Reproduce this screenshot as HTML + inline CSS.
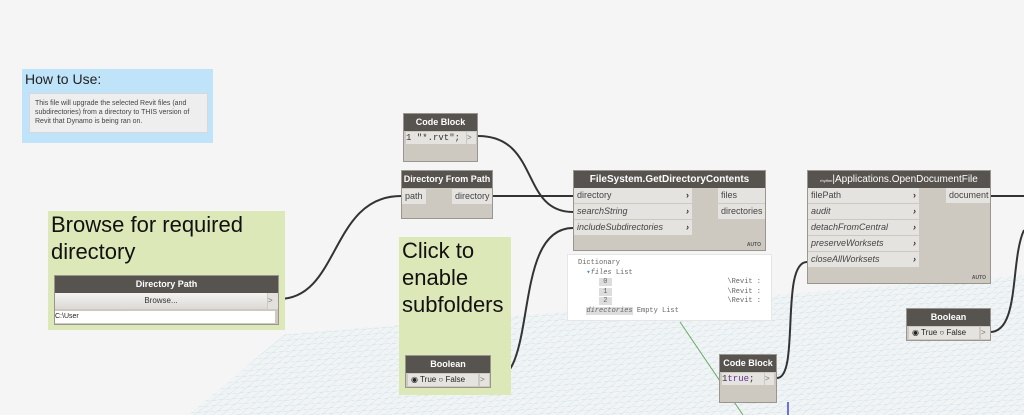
<!DOCTYPE html>
<html><head><meta charset="utf-8"><style>
*{box-sizing:border-box;margin:0;padding:0}
body{width:1024px;height:415px;overflow:hidden;background:#f5f5f5;font-family:"Liberation Sans",sans-serif;position:relative}
.a{position:absolute}
.node{position:absolute;background:#cdc9c1;border:1px solid #9a968f}
.hd{background:#57534f;color:#fff;font-weight:bold;font-size:9px;text-align:center;height:17px;line-height:17px}
.row{position:absolute;background:#e5e3df;font-size:9px;color:#444;height:15px;line-height:15px;padding-left:3px}
.it{font-style:italic}
.arr{position:absolute;right:3px;font-weight:bold;color:#333}
.note{position:absolute;background:#dde8b8;font-size:22px;color:#111;line-height:27px;padding-left:3px}
</style></head><body>
<svg class="a" style="left:0;top:0" width="1024" height="415">
<defs>
<pattern id="g" width="10" height="10" patternUnits="userSpaceOnUse" patternTransform="matrix(1.0,-0.075,-0.75,0.6,285,335)">
<rect width="10" height="10" fill="#f1f4f5"/>
<path d="M0 0H10M0 0V10" stroke="#c6dbe5" stroke-width="1.1" fill="none"/>
</pattern>
</defs>
<polygon points="285,334 1024,275 1024,415 188,415" fill="url(#g)"/>
<line x1="680" y1="322" x2="743" y2="415" stroke="#6a6" stroke-width="1"/>
<line x1="788" y1="402" x2="788" y2="415" stroke="#44d" stroke-width="1.5"/>
<g stroke="#333" stroke-width="2" fill="none">
<path d="M279 299 C340 299 330 196 401 196"/>
<path d="M478 136 C540 136 520 212 573 212"/>
<path d="M493 196 L573 196"/>
<path d="M491 381 C540 381 510 228 573 228"/>
<path d="M777 378 C800 378 780 262 807 262"/>
<path d="M990 196 L1024 196"/>
<path d="M990 332 C1020 332 1010 260 1024 230"/>
</g>
</svg>

<div class="a" style="left:22px;top:69px;width:191px;height:74px;background:#bfe3f9">
<div style="font-size:14px;color:#222;padding:2px 3px">How to Use:</div>
<div class="a" style="left:7px;top:24px;width:179px;height:40px;background:#eee;border:1px solid #d8d8d8;font-size:7px;color:#444;line-height:9px;padding:5px 5px">This file will upgrade the selected Revit files (and subdirectories) from a directory to THIS version of Revit that Dynamo is being ran on.</div>
</div>

<div class="note" style="left:48px;top:211px;width:237px;height:119px;padding-top:0">Browse for required<br>directory</div>
<div class="node" style="left:54px;top:275px;width:225px;height:50px">
<div class="hd">Directory Path</div>
<div class="a" style="left:0;top:17px;width:212px;height:16px;background:linear-gradient(#f4f3f1,#dcd9d4);font-size:8px;text-align:center;line-height:16px;color:#333">Browse...</div>
<div class="a" style="left:213px;top:17px;width:10px;height:16px;background:#e3e1dd;font-size:8px;line-height:16px;color:#777">&gt;</div>
<div class="a" style="left:0;top:35px;width:220px;height:12px;background:#fff;font-size:7px;line-height:12px;color:#222">C:\User</div>
</div>

<div class="note" style="left:399px;top:237px;width:112px;height:158px">Click to<br>enable<br>subfolders</div>
<div class="node" style="left:405px;top:355px;width:86px;height:33px">
<div class="hd">Boolean</div>
<div class="a" style="left:2px;top:18px;width:70px;height:12px;background:#e5e3df;font-size:8px;line-height:12px;color:#222;padding-left:3px">◉ True ○ False</div>
<div class="a" style="left:74px;top:18px;width:9px;height:12px;background:#e5e3df;font-size:8px;line-height:12px;color:#777">&gt;</div>
</div>

<div class="node" style="left:403px;top:113px;width:75px;height:49px">
<div class="hd">Code Block</div>
<div class="a" style="left:2px;top:18px;width:60px;height:12px;background:#e5e3df;font-family:'Liberation Mono',monospace;font-size:9px;line-height:12px;color:#333">1 "*.rvt";</div>
<div class="a" style="left:63px;top:18px;width:9px;height:12px;background:#e5e3df;font-size:8px;line-height:12px;color:#777">&gt;</div>
</div>

<div class="node" style="left:401px;top:170px;width:92px;height:49px">
<div class="hd">Directory From Path</div>
<div class="row" style="left:0;top:18px;width:24px">path</div>
<div class="row" style="left:50px;top:18px;width:40px">directory</div>
</div>

<div class="node" style="left:573px;top:170px;width:193px;height:81px">
<div class="hd" style="font-size:10px">FileSystem.GetDirectoryContents</div>
<div class="row" style="left:0;top:17px;width:118px">directory<span class="arr">›</span></div>
<div class="row it" style="left:0;top:33px;width:118px">searchString<span class="arr">›</span></div>
<div class="row it" style="left:0;top:49px;width:118px">includeSubdirectories<span class="arr">›</span></div>
<div class="row" style="left:144px;top:17px;width:47px">files</div>
<div class="row" style="left:144px;top:33px;width:47px">directories</div>
<div class="a" style="right:4px;bottom:2px;font-size:5px;color:#555;font-weight:bold">AUTO</div>
</div>

<div class="a" style="left:567px;top:254px;width:205px;height:67px;background:#fff;border:1px solid #e6e6e6;font-family:'Liberation Mono',monospace;font-size:7px;color:#666;line-height:9.5px;padding:4px 10px">
Dictionary<br>&nbsp;&nbsp;<span style="color:#48c">▾</span><i>files</i> List<br>
&nbsp;&nbsp;&nbsp;&nbsp;&nbsp;<span style="background:#ddd">&nbsp;0&nbsp;</span><span style="float:right">\Revit :</span><br>
&nbsp;&nbsp;&nbsp;&nbsp;&nbsp;<span style="background:#ddd">&nbsp;1&nbsp;</span><span style="float:right">\Revit :</span><br>
&nbsp;&nbsp;&nbsp;&nbsp;&nbsp;<span style="background:#ddd">&nbsp;2&nbsp;</span><span style="float:right">\Revit :</span><br>
&nbsp;&nbsp;<span style="background:#ddd"><i>directories</i></span> Empty List
</div>

<div class="node" style="left:807px;top:170px;width:184px;height:114px">
<div class="hd" style="font-size:10px;font-weight:normal"><span style="font-size:4px">rhythm</span>|Applications.OpenDocumentFile <span style="background:#f0d060;color:#553;font-size:5px;padding:0 2px">Renamed</span></div>
<div class="row" style="left:0;top:17px;width:111px">filePath<span class="arr">›</span></div>
<div class="row it" style="left:0;top:33px;width:111px">audit<span class="arr">›</span></div>
<div class="row it" style="left:0;top:49px;width:111px">detachFromCentral<span class="arr">›</span></div>
<div class="row it" style="left:0;top:65px;width:111px">preserveWorksets<span class="arr">›</span></div>
<div class="row it" style="left:0;top:81px;width:111px">closeAllWorksets<span class="arr">›</span></div>
<div class="row" style="left:138px;top:17px;width:44px">document</div>
<div class="a" style="right:4px;bottom:2px;font-size:5px;color:#555;font-weight:bold">AUTO</div>
</div>

<div class="node" style="left:906px;top:308px;width:85px;height:33px">
<div class="hd">Boolean</div>
<div class="a" style="left:2px;top:18px;width:70px;height:12px;background:#e5e3df;font-size:8px;line-height:12px;color:#222;padding-left:3px">◉ True ○ False</div>
<div class="a" style="left:74px;top:18px;width:9px;height:12px;background:#e5e3df;font-size:8px;line-height:12px;color:#777">&gt;</div>
</div>

<div class="node" style="left:719px;top:354px;width:58px;height:49px">
<div class="hd">Code Block</div>
<div class="a" style="left:2px;top:18px;width:42px;height:12px;background:#e5e3df;font-family:'Liberation Mono',monospace;font-size:9px;line-height:12px;color:#333">1<span style="color:#639">true</span>;</div>
<div class="a" style="left:45px;top:18px;width:9px;height:12px;background:#e5e3df;font-size:8px;line-height:12px;color:#777">&gt;</div>
</div>
</body></html>
